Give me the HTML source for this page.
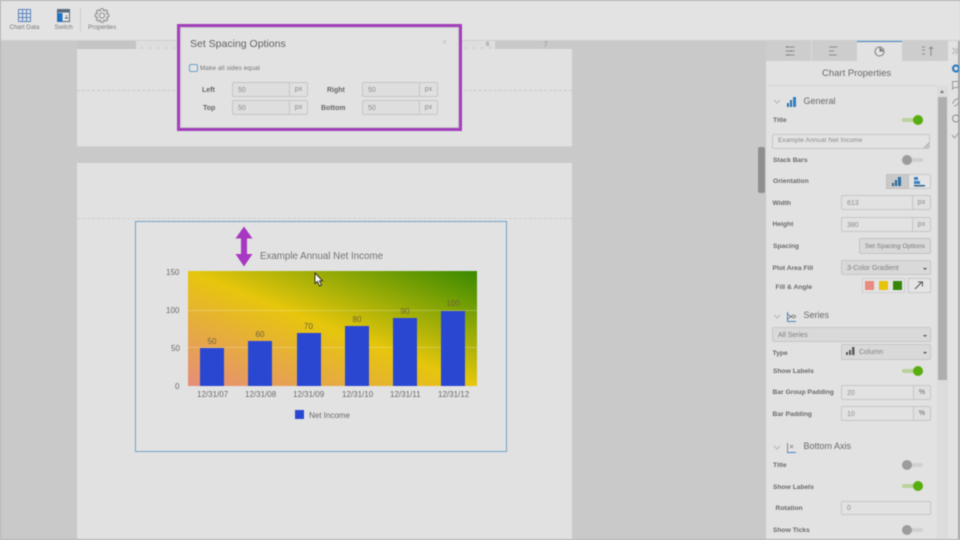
<!DOCTYPE html>
<html>
<head>
<meta charset="utf-8">
<style>
*{box-sizing:border-box}
html,body{margin:0;padding:0;width:960px;height:540px;overflow:hidden;background:#c9c9c9}
body{font-family:"Liberation Sans",sans-serif;color:#666;position:relative}
#w{position:absolute;left:0;top:0;width:960px;height:540px;overflow:hidden;filter:blur(.45px)}
.a,.t,.i,.tg,.sel{position:absolute}
.t{white-space:nowrap;line-height:1}
.lb{font-size:6.700px;font-weight:bold;color:#666;margin-top:1.500px}
.i{background:#e2e2e2;border:1px solid #c6c6c6;border-radius:2px;font-size:7px;color:#8c8c8c;line-height:1;padding:1px 0 0 5px;display:flex;align-items:center}
.i b{position:absolute;right:0;top:0;bottom:0;border-left:1px solid #c6c6c6;font-weight:normal;text-align:center;display:flex;align-items:center;justify-content:center;background:#e0e0e0;color:#8a8a8a}
.sel{background:#d9d9d9;border:1px solid #c6c6c6;border-radius:2px;font-size:7px;color:#808080;display:flex;align-items:center;padding:1px 0 0 5px}
.sel:after{content:"";position:absolute;right:3px;top:50%;margin-top:0;border:2.5px solid transparent;border-top:2.5px solid #555}
.tg{width:21px;height:10px}
.tg:before{content:"";position:absolute;left:0;right:0;top:3px;height:4px;border-radius:2px;background:#d0d0d0}
.tg:after{content:"";position:absolute;left:0;top:0;width:10px;height:10px;border-radius:50%;background:#9c9c9c}
.tg.on:before{background:#b9d19a}
.tg.on:after{left:11px;background:#58ad0e}
.ax{font-size:8px;color:#6a6a6a;margin-top:1px}
.v{font-size:8px;color:#6f6238;text-align:center;width:30px;margin-top:1px}
</style>
</head>
<body>
<div id="w">
<!-- toolbar -->
<div class="a" style="left:0;top:0;width:960px;height:41px;background:#e3e3e3;border-top:1px solid #b5b5b5;border-bottom:1px solid #cfcfcf"></div>
<svg class="a" style="left:0;top:0" width="130" height="40">
<g fill="none" stroke="#5f84b5" stroke-width="1">
<rect x="18.500" y="9.500" width="12" height="12" fill="#dbe3ef"/>
<path d="M22.500 9.500v12M26.500 9.500v12M18.500 13.500h12M18.500 17.500h12"/>
</g>
<rect x="57.500" y="9.500" width="12" height="12" fill="#e6e6e6" stroke="#5b6b7b"/>
<rect x="57" y="9" width="13" height="3.500" fill="#5b6b7b"/>
<rect x="57.500" y="13" width="5" height="9" fill="#1e73c4"/>
<path d="M65 18h3M66.500 15.500v1" stroke="#445" fill="none"/>
<path d="M80.500 8v24" stroke="#cfcfcf"/>
<g transform="translate(102 15.500)" fill="#e3e3e3" stroke="#7b7b7b" stroke-width=".8">
<circle r="5.300" fill="none"/>
<path d="M-1.900 -5L-1.200 -6.900H1.200L1.900 -5"/>
<path transform="rotate(45)" d="M-1.900 -5L-1.200 -6.900H1.200L1.900 -5"/>
<path transform="rotate(90)" d="M-1.900 -5L-1.200 -6.900H1.200L1.900 -5"/>
<path transform="rotate(135)" d="M-1.900 -5L-1.200 -6.900H1.200L1.900 -5"/>
<path transform="rotate(180)" d="M-1.900 -5L-1.200 -6.900H1.200L1.900 -5"/>
<path transform="rotate(225)" d="M-1.900 -5L-1.200 -6.900H1.200L1.900 -5"/>
<path transform="rotate(270)" d="M-1.900 -5L-1.200 -6.900H1.200L1.900 -5"/>
<path transform="rotate(315)" d="M-1.900 -5L-1.200 -6.900H1.200L1.900 -5"/>
<circle r="2.600" fill="none"/>
</g>
</svg>
<div class="t" style="left:9.500px;top:25px;font-size:6.200px;color:#7a7a7a">Chart Data</div>
<div class="t" style="left:54.500px;top:25px;font-size:6.200px;color:#7a7a7a">Switch</div>
<div class="t" style="left:88px;top:25px;font-size:6.200px;color:#7a7a7a">Properties</div>

<!-- ruler -->
<div class="a" style="left:77px;top:41px;width:59px;height:8px;background:#c4c4c4"></div>
<div class="a" style="left:136px;top:41px;width:359px;height:8px;background:#dedede"></div>
<svg class="a" style="left:136px;top:41px" width="420" height="9">
<path d="M6 6v2M14 6v2M22 6v2M30 6v2M38 6v2M46 6v2M330 6v2M338 6v2M346 6v2M354 6v2M409 5v3" stroke="#c0c0c0"/>
</svg>
<div class="t" style="left:486px;top:42px;font-size:6px;color:#888">6</div>
<div class="t" style="left:544px;top:42px;font-size:6px;color:#888">7</div>

<!-- pages -->
<div class="a" style="left:77px;top:49px;width:495px;height:98px;background:#e1e1e1;border-bottom:1px solid #d2d2d2"></div>
<div class="a" style="left:77px;top:90px;width:495px;border-top:1px dashed #c9c9c9"></div>
<div class="a" style="left:77px;top:163px;width:495px;height:377px;background:#e1e1e1"></div>
<div class="a" style="left:77px;top:218px;width:495px;border-top:1px dashed #cdcdcd"></div>

<!-- chart box -->
<div class="a" style="left:135px;top:221px;width:372px;height:231px;border:1px solid #6ea2c6;background:#e2e2e2"></div>
<div class="t" style="left:260px;top:252px;font-size:9.750px;color:#737373">Example Annual Net Income</div>
<svg class="a" style="left:234px;top:226px" width="20" height="41">
<path d="M10 .5L18.500 12.500H13V28H18.500L10 40.500L1.500 28H7V12.500H1.500Z" fill="#a738c2"/>
</svg>
<!-- plot -->
<div class="a" style="left:188px;top:271px;width:289px;height:115px;background:linear-gradient(to top right,#e68d7a 0%,#e6c60c 50%,#388a00 100%)"></div>
<div class="a" style="left:188px;top:310px;width:289px;height:1px;background:rgba(255,255,255,.25)"></div>
<div class="a" style="left:188px;top:347px;width:289px;height:1px;background:rgba(255,255,255,.25)"></div>
<div class="a" style="left:200px;top:348px;width:24px;height:38px;background:#2a47d2"></div>
<div class="a" style="left:248px;top:341px;width:24px;height:45px;background:#2a47d2"></div>
<div class="a" style="left:296.500px;top:333px;width:24px;height:53px;background:#2a47d2"></div>
<div class="a" style="left:345px;top:325.500px;width:24px;height:60.500px;background:#2a47d2"></div>
<div class="a" style="left:393px;top:318px;width:24px;height:68px;background:#2a47d2"></div>
<div class="a" style="left:441px;top:310.500px;width:24px;height:75.500px;background:#2a47d2"></div>
<div class="t v" style="left:197px;top:337px">50</div>
<div class="t v" style="left:245px;top:330px">60</div>
<div class="t v" style="left:293.500px;top:322px">70</div>
<div class="t v" style="left:342px;top:315px">80</div>
<div class="t v" style="left:390px;top:307px">90</div>
<div class="t v" style="left:438px;top:299px">100</div>
<div class="t ax" style="left:166px;top:268px">150</div>
<div class="t ax" style="left:166px;top:306px">100</div>
<div class="t ax" style="left:171px;top:344px">50</div>
<div class="t ax" style="left:175px;top:382px">0</div>
<div class="t ax" style="left:197px;top:390px">12/31/07</div>
<div class="t ax" style="left:245px;top:390px">12/31/08</div>
<div class="t ax" style="left:293px;top:390px">12/31/09</div>
<div class="t ax" style="left:342px;top:390px">12/31/10</div>
<div class="t ax" style="left:390px;top:390px">12/31/11</div>
<div class="t ax" style="left:438px;top:390px">12/31/12</div>
<div class="a" style="left:295px;top:410px;width:9px;height:9px;background:#2a47d2"></div>
<div class="t ax" style="left:309px;top:411px">Net Income</div>
<!-- cursor -->
<svg class="a" style="left:314px;top:272px" width="11" height="16">
<path d="M1 1V11.500L3.500 9.500L5.500 14L7.500 13L5.500 8.800H8.500Z" fill="#fff" stroke="#222" stroke-width=".9"/>
</svg>

<!-- dialog -->
<div class="a" style="left:177px;top:24px;width:285px;height:107px;border:3px solid #a23fbb;background:#e2e2e2;box-shadow:inset 0 0 0 1px #c9c9c9"></div>
<div class="t" style="left:190px;top:39px;font-size:10.500px;color:#626262">Set Spacing Options</div>
<div class="t" style="left:442px;top:38px;font-size:9px;color:#bdbdbd">×</div>
<div class="a" style="left:189px;top:64px;width:9px;height:8px;border:1px solid #6b9fc9;border-radius:2px;background:#e4e4e4"></div>
<div class="t" style="left:200px;top:66px;font-size:6.400px;color:#757575;letter-spacing:.1px">Make all sides equal</div>
<div class="t lb" style="left:202px;top:85px;font-size:7px">Left</div>
<div class="t lb" style="left:327px;top:85px;font-size:7px">Right</div>
<div class="t lb" style="left:203px;top:103px;font-size:7px">Top</div>
<div class="t lb" style="left:321px;top:103px;font-size:7px">Bottom</div>
<div class="i" style="left:232px;top:82px;width:76px;height:15px;background:#dedede">50<b style="width:18px">px</b></div>
<div class="i" style="left:362px;top:82px;width:76px;height:15px;background:#dedede">50<b style="width:18px">px</b></div>
<div class="i" style="left:232px;top:100px;width:76px;height:15px;background:#dedede">50<b style="width:18px">px</b></div>
<div class="i" style="left:362px;top:100px;width:76px;height:15px;background:#dedede">50<b style="width:18px">px</b></div>

<!-- left scroll thumb -->
<div class="a" style="left:758px;top:147px;width:7px;height:46px;background:#8f8f8f;border-radius:2px"></div>

<!-- side panel -->
<div class="a" style="left:766px;top:41px;width:182px;height:499px;background:#e2e2e2"></div>
<div class="a" style="left:766px;top:41px;width:91px;height:20px;background:#cdcdcd"></div>
<div class="a" style="left:902px;top:41px;width:46px;height:20px;background:#cdcdcd"></div>
<div class="a" style="left:811px;top:41px;width:1px;height:20px;background:#dcdcdc"></div>
<div class="a" style="left:857px;top:41px;width:45px;height:1px;background:#3f86c4"></div>
<svg class="a" style="left:766px;top:41px" width="182" height="20">
<path d="M19.500 6h9M19.500 10h9M19.500 14h9M21 5v2M25 9v2M22 13v2M63 6h8M63 10h5M63 14h8" stroke="#8c8c8c" fill="none"/>
<circle cx="113.500" cy="10.500" r="4.500" fill="none" stroke="#7a7a7a"/>
<path d="M113.500 6v4.500H118z" fill="#7a7a7a"/>
<path d="M156 6h3M156 9h3M156 13h3M165 6v9M163 8l2-2 2 2" stroke="#8c8c8c" fill="none"/>
</svg>
<div class="t" style="left:822px;top:68.500px;font-size:9.500px;color:#686868">Chart Properties</div>
<div class="a" style="left:767px;top:85px;width:170px;height:1px;background:#d2d2d2"></div>
<div class="a" style="left:937px;top:86px;width:11px;height:454px;background:#dcdcdc"></div>
<div class="a" style="left:938px;top:97px;width:9px;height:283px;background:#aeaeae"></div>
<div class="a" style="left:940px;top:90px;border:2.500px solid transparent;border-bottom:3px solid #777;border-top:0"></div>

<!-- right rail -->
<div class="a" style="left:948px;top:41px;width:10px;height:499px;background:#e2e2e2"></div>
<div class="a" style="left:958px;top:41px;width:2px;height:499px;background:#a9a9a9"></div>
<svg class="a" style="left:948px;top:41px" width="11" height="110">
<path d="M7.500 7l3 3-3 3M4.500 7l3 3-3 3" fill="none" stroke="#b2b2b2"/>
<circle cx="8" cy="27.500" r="3" fill="none" stroke="#2e7cc0" stroke-width="2.200"/>
<path d="M4.500 40.500h6v6h-4l-2 1.500z" fill="none" stroke="#9a9a9a"/>
<path d="M5 63c0-3 2-4 5-5.500M6 65c2 0 4-2 5-4" fill="none" stroke="#9a9a9a"/>
<circle cx="8" cy="77.500" r="3.500" fill="none" stroke="#8d8d8d"/>
<path d="M4 94l2.500 3 4-5" fill="none" stroke="#9a9a9a"/>
</svg>

<!-- General -->
<svg class="a" style="left:772px;top:95px" width="26" height="13">
<path d="M2 5l3 3 3-3" fill="none" stroke="#aaa" stroke-width=".8"/>
<path d="M15 8h2v4h-2zM18 5h2v7h-2z" fill="#2d6fa8"/><path d="M21 2h3v10h-3z" fill="#2f7fc4"/>
</svg>
<div class="t" style="left:803.500px;top:97px;font-size:9px;color:#696969">General</div>
<div class="t lb" style="left:773px;top:116px;color:#6a6a6a">Title</div>
<div class="tg on" style="left:902px;top:115px"></div>
<div class="a" style="left:772px;top:134px;width:158px;height:15px;border:1px solid #c6c6c6;border-radius:2px;background:#e3e3e3"></div>
<div class="t" style="left:778px;top:138px;font-size:6.500px;color:#8a8a8a;letter-spacing:.1px">Example Annual Net Income</div>
<svg class="a" style="left:923px;top:142px" width="7" height="7"><path d="M1 6L6 1M3.500 6L6 3.500" stroke="#888" stroke-width=".7"/></svg>
<div class="t lb" style="left:773px;top:156px;color:#6a6a6a">Stack Bars</div>
<div class="tg" style="left:902px;top:155px"></div>
<div class="t lb" style="left:773px;top:177.500px;color:#6a6a6a">Orientation</div>
<div class="a" style="left:886px;top:174px;width:45px;height:15px;border:1px solid #c8c8c8;border-radius:2px;background:#e4e4e4"></div>
<div class="a" style="left:886px;top:174px;width:23px;height:15px;border:1px solid #c0c0c0;background:#c9c9c9"></div>
<svg class="a" style="left:886px;top:174px" width="45" height="15">
<path d="M6 9h2v3H6zM9 6h2v6H9z" fill="#2d6288"/><path d="M12 3h3v9h-3z" fill="#276fa9"/>
<path d="M28 3h4v3h-4zM28 7h6v3h-6z" fill="#3a83c0"/><path d="M28 11h11v1.500H28z" fill="#2d5f86"/>
</svg>
<div class="t lb" style="left:772.500px;top:199px;color:#6a6a6a">Width</div>
<div class="i" style="left:841px;top:195px;width:90px;height:15px">613<b style="width:18px">px</b></div>
<div class="t lb" style="left:772.500px;top:220.500px;color:#6a6a6a">Height</div>
<div class="i" style="left:841px;top:217px;width:90px;height:15px">380<b style="width:18px">px</b></div>
<div class="t lb" style="left:773px;top:242px;color:#6a6a6a">Spacing</div>
<div class="a" style="left:859px;top:238px;width:72px;height:16px;background:#d9d9d9;border:1px solid #c4c4c4;border-radius:2px;font-size:6.600px;color:#7a7a7a;text-align:center;line-height:15px">Set Spacing Options</div>
<div class="t lb" style="left:772.500px;top:264px;color:#6a6a6a">Plot Area Fill</div>
<div class="sel" style="left:841px;top:260px;width:90px;height:15px">3-Color Gradient</div>
<div class="t lb" style="left:775.500px;top:283px;color:#6a6a6a">Fill &amp; Angle</div>
<div class="a" style="left:862px;top:278px;width:43px;height:15px;border:1px solid #cfcfcf;background:#e4e4e4"></div>
<div class="a" style="left:865px;top:281px;width:9px;height:9px;background:#e88a7e"></div>
<div class="a" style="left:879px;top:281px;width:9px;height:9px;background:#e6c40c"></div>
<div class="a" style="left:893px;top:281px;width:9px;height:9px;background:#37860a"></div>
<div class="a" style="left:908px;top:278px;width:23px;height:15px;border:1px solid #c8c8c8;background:#e5e5e5"></div>
<svg class="a" style="left:908px;top:278px" width="23" height="15"><path d="M7 11L14 4M10 4h4.500v4.500" fill="none" stroke="#555" stroke-width="1"/></svg>

<!-- Series -->
<svg class="a" style="left:772px;top:310px" width="26" height="13">
<path d="M2 5l3 3 3-3" fill="none" stroke="#aaa" stroke-width=".8"/>
<path d="M15.500 2v9.500H24" fill="none" stroke="#4a86b8"/><path d="M16 4l3 3 2-2 3 1M16 9l3-3 2 2 3-1" fill="none" stroke="#666" stroke-width=".7"/>
</svg>
<div class="t" style="left:803.500px;top:311px;font-size:9px;color:#696969">Series</div>
<div class="sel" style="left:772px;top:327px;width:159px;height:15px">All Series</div>
<div class="t lb" style="left:772.500px;top:349px;color:#6a6a6a">Type</div>
<div class="sel" style="left:841px;top:344px;width:90px;height:16px;padding-left:17px">Column</div>
<svg class="a" style="left:846px;top:347px" width="10" height="9"><path d="M0 5h2v3H0zM3 3h2v5H3zM6 0h2.500v8H6z" fill="#5a5a5a"/></svg>
<div class="t lb" style="left:773px;top:367px;color:#6a6a6a">Show Labels</div>
<div class="tg on" style="left:902px;top:366px"></div>
<div class="t lb" style="left:772.500px;top:388.500px;color:#6a6a6a">Bar Group Padding</div>
<div class="i" style="left:841px;top:385px;width:90px;height:15px">20<b style="width:17px;font-weight:bold">%</b></div>
<div class="t lb" style="left:772.500px;top:410px;color:#6a6a6a">Bar Padding</div>
<div class="i" style="left:841px;top:406px;width:90px;height:15px">10<b style="width:17px;font-weight:bold">%</b></div>

<!-- Bottom Axis -->
<svg class="a" style="left:772px;top:441px" width="26" height="13">
<path d="M2 5l3 3 3-3" fill="none" stroke="#aaa" stroke-width=".8"/>
<path d="M15.500 2v9" stroke="#888" fill="none"/><path d="M15 11.500h9" stroke="#3f86c4" fill="none"/>
<path d="M18 4l3 3M21 4l-3 3" stroke="#888" stroke-width=".8" fill="none"/>
</svg>
<div class="t" style="left:803.500px;top:442px;font-size:9px;color:#696969">Bottom Axis</div>
<div class="t lb" style="left:773px;top:461px;color:#6a6a6a">Title</div>
<div class="tg" style="left:902px;top:460px"></div>
<div class="t lb" style="left:773px;top:483px;color:#6a6a6a">Show Labels</div>
<div class="tg on" style="left:902px;top:481px"></div>
<div class="t lb" style="left:775.500px;top:504.500px;color:#6a6a6a">Rotation</div>
<div class="i" style="left:841px;top:501px;width:90px;height:14px">0</div>
<div class="t lb" style="left:773px;top:526px;color:#6a6a6a">Show Ticks</div>
<div class="tg" style="left:902px;top:525px"></div>
<div class="a" style="left:0;top:539px;width:960px;height:1px;background:#b5b5b5"></div>
<div class="a" style="left:0;top:0;width:1px;height:540px;background:#b5b5b5"></div>
</div>
</body>
</html>
